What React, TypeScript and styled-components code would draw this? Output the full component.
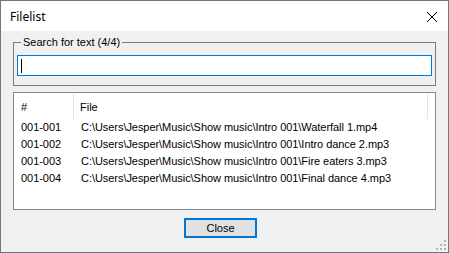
import React from 'react'
import styled, { createGlobalStyle } from 'styled-components'

const GlobalStyle = createGlobalStyle`
  html, body {
    margin: 0;
    padding: 0;
    background: #ffffff;
  }
  * {
    box-sizing: border-box;
  }
`

const Window = styled.div`
  position: relative;
  width: 449px;
  height: 253px;
  border: 1px solid #767676;
  background: #f0f0f0;
  display: flex;
  flex-direction: column;
  font-family: "Liberation Sans", Arial, sans-serif;
  font-size: 11px;
  color: #000;
`

const TitleBar = styled.div`
  height: 30px;
  background: #ffffff;
  display: flex;
  align-items: center;
  justify-content: space-between;
  padding: 0 10px 0 9px;
`

const Title = styled.div`
  font-family: "Noto Sans", "Open Sans", sans-serif;
  font-size: 12px;
  padding-top: 1px;
`

const CloseGlyph = styled.svg`
  display: block;
  width: 12px;
  height: 12px;
  margin-top: 1px;
`

const Client = styled.div`
  flex: 1;
  display: flex;
  flex-direction: column;
  padding: 5px 12px 0 12px;
`

const GroupBox = styled.fieldset`
  margin: 0;
  padding: 6px 3px 9px 3px;
  border: 1px solid #7c7c7c;
  min-width: 0;
`

const GroupLabel = styled.legend`
  padding: 0 2px;
  margin-left: 4px;
  line-height: 13px;
  font-size: 11px;
`

const SearchInput = styled.div`
  height: 21px;
  border: 1px solid #0078d7;
  background: #ffffff;
  display: flex;
  align-items: center;
  padding-left: 3px;
`

const Caret = styled.span`
  display: block;
  width: 1px;
  height: 14px;
  background: #000;
`

const ListView = styled.div`
  margin-top: 6px;
  height: 118px;
  border: 1px solid #828790;
  background: #ffffff;
  display: flex;
  flex-direction: column;
`

const HeaderRow = styled.div`
  display: flex;
  height: 25px;
  align-items: center;
`

const HeaderCell = styled.div<{ $w?: number; $divider?: boolean }>`
  width: ${({ $w }) => ($w ? `${$w}px` : 'auto')};
  flex: ${({ $w }) => ($w ? 'none' : '1')};
  height: 100%;
  display: flex;
  align-items: center;
  padding-left: ${({ $w }) => ($w ? '7px' : '6px')};
  border-right: ${({ $divider }) => ($divider ? '1px solid #e5e5e5' : 'none')};
  margin-top: 2px;
`

const HeaderFiller = styled.div`
  width: 7px;
  height: 100%;
  margin-top: 2px;
`

const Row = styled.div`
  display: flex;
  height: 17px;
  align-items: center;
  padding-top: 1px;
`

const Cell = styled.div<{ $w?: number }>`
  width: ${({ $w }) => ($w ? `${$w}px` : 'auto')};
  flex: ${({ $w }) => ($w ? 'none' : '1')};
  padding-left: ${({ $w }) => ($w ? '7px' : '6px')};
  white-space: nowrap;
  letter-spacing: -0.05px;
`

const Footer = styled.div`
  display: flex;
  justify-content: center;
  padding: 8px 8px 0 0;
`

const Button = styled.button`
  width: 73px;
  height: 20px;
  border: 2px solid #0078d7;
  background: #e1e1e1;
  font-family: "Liberation Sans", Arial, sans-serif;
  font-size: 11px;
  color: #000;
  padding: 0;
  margin: 0;
`

const Grip = styled.svg`
  position: absolute;
  right: 1px;
  bottom: 1px;
  width: 11px;
  height: 11px;
`

const rows = [
  ['001-001', 'C:\\Users\\Jesper\\Music\\Show music\\Intro 001\\Waterfall 1.mp4'],
  ['001-002', 'C:\\Users\\Jesper\\Music\\Show music\\Intro 001\\Intro dance 2.mp3'],
  ['001-003', 'C:\\Users\\Jesper\\Music\\Show music\\Intro 001\\Fire eaters 3.mp3'],
  ['001-004', 'C:\\Users\\Jesper\\Music\\Show music\\Intro 001\\Final dance 4.mp3'],
]

const App: React.FC = () => {
  return (
    <>
      <GlobalStyle />
      <Window>
        <TitleBar>
          <Title>Filelist</Title>
          <CloseGlyph viewBox="0 0 12 12">
            <path d="M1 1 L11 11 M11 1 L1 11" stroke="#000" strokeWidth="1" fill="none" />
          </CloseGlyph>
        </TitleBar>
        <Client>
          <GroupBox>
            <GroupLabel>Search for text (4/4)</GroupLabel>
            <SearchInput>
              <Caret />
            </SearchInput>
          </GroupBox>
          <ListView>
            <HeaderRow>
              <HeaderCell $w={60} $divider>#</HeaderCell>
              <HeaderCell $divider>File</HeaderCell>
              <HeaderFiller />
            </HeaderRow>
            {rows.map(([id, path]) => (
              <Row key={id}>
                <Cell $w={61}>{id}</Cell>
                <Cell>{path}</Cell>
              </Row>
            ))}
          </ListView>
          <Footer>
            <Button>Close</Button>
          </Footer>
        </Client>
        <Grip viewBox="0 0 11 11">
          <g fill="#b4b4b4">
            <rect x="8" y="0" width="2" height="2" />
            <rect x="4" y="4" width="2" height="2" />
            <rect x="8" y="4" width="2" height="2" />
            <rect x="0" y="8" width="2" height="2" />
            <rect x="4" y="8" width="2" height="2" />
            <rect x="8" y="8" width="2" height="2" />
          </g>
        </Grip>
      </Window>
    </>
  )
}

export default App
